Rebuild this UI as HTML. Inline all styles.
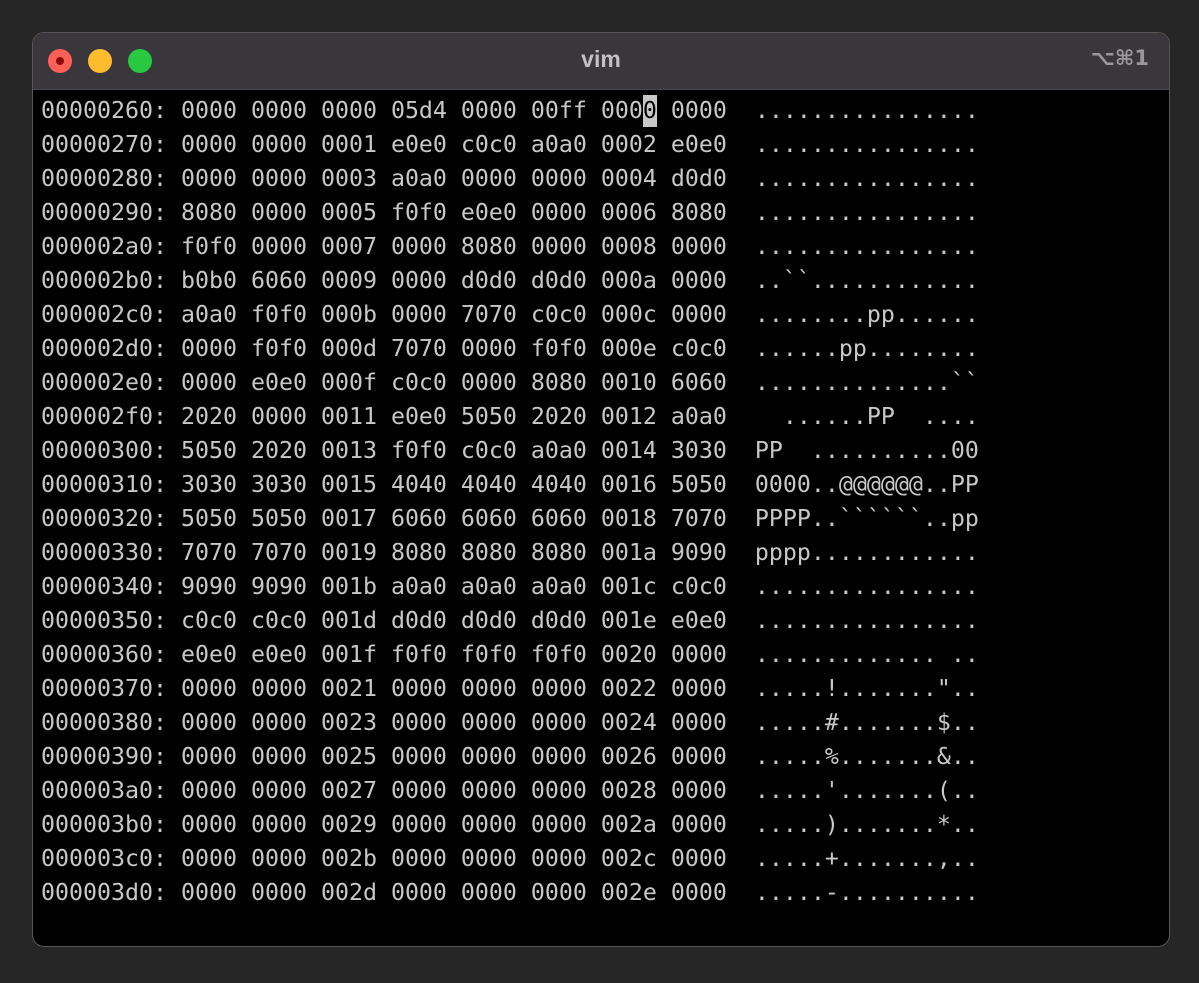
<!DOCTYPE html>
<html><head><style>
html,body{margin:0;padding:0;background:#262626;width:1199px;height:983px;overflow:hidden}
.win{position:absolute;left:32px;top:32px;width:1136px;height:913px;border:1px solid #555;border-radius:12px;background:#000;overflow:hidden}
.tb{position:absolute;left:0;top:0;right:0;height:56px;background:#3a373c;border-bottom:1px solid #4a484c}
.dot{position:absolute;top:16px;width:24px;height:24px;border-radius:50%}
.title{position:absolute;left:0;right:0;top:13px;text-align:center;font:bold 23px "Liberation Sans",sans-serif;color:#c2c0c4}
.sc{position:absolute;right:20px;top:13px;font:bold 21px "DejaVu Sans","Liberation Sans",sans-serif;color:#9a989c}
pre{position:absolute;left:8px;top:61px;margin:0;font-family:"DejaVu Sans Mono",monospace;font-size:23.25px;line-height:34px;color:#c8c8c8}
.cur{background:#c8c8c8;color:#000;display:inline-block;line-height:32px;height:32px;vertical-align:top;margin-top:1px}
</style></head><body>
<div class="win">
<div class="tb">
<div class="dot" style="left:15px;background:#fe5f57"><div style="position:absolute;left:8px;top:8px;width:8px;height:8px;border-radius:50%;background:#8e0a0a"></div></div>
<div class="dot" style="left:55px;background:#febc2e"></div>
<div class="dot" style="left:95px;background:#28c840"></div>
<div class="title">vim</div>
<div class="sc">⌥⌘1</div>
</div>
<pre>00000260: 0000 0000 0000 05d4 0000 00ff 000<span class="cur">0</span> 0000  ................
00000270: 0000 0000 0001 e0e0 c0c0 a0a0 0002 e0e0  ................
00000280: 0000 0000 0003 a0a0 0000 0000 0004 d0d0  ................
00000290: 8080 0000 0005 f0f0 e0e0 0000 0006 8080  ................
000002a0: f0f0 0000 0007 0000 8080 0000 0008 0000  ................
000002b0: b0b0 6060 0009 0000 d0d0 d0d0 000a 0000  ..&#96;&#96;............
000002c0: a0a0 f0f0 000b 0000 7070 c0c0 000c 0000  ........pp......
000002d0: 0000 f0f0 000d 7070 0000 f0f0 000e c0c0  ......pp........
000002e0: 0000 e0e0 000f c0c0 0000 8080 0010 6060  ..............&#96;&#96;
000002f0: 2020 0000 0011 e0e0 5050 2020 0012 a0a0    ......PP  ....
00000300: 5050 2020 0013 f0f0 c0c0 a0a0 0014 3030  PP  ..........00
00000310: 3030 3030 0015 4040 4040 4040 0016 5050  0000..@@@@@@..PP
00000320: 5050 5050 0017 6060 6060 6060 0018 7070  PPPP..&#96;&#96;&#96;&#96;&#96;&#96;..pp
00000330: 7070 7070 0019 8080 8080 8080 001a 9090  pppp............
00000340: 9090 9090 001b a0a0 a0a0 a0a0 001c c0c0  ................
00000350: c0c0 c0c0 001d d0d0 d0d0 d0d0 001e e0e0  ................
00000360: e0e0 e0e0 001f f0f0 f0f0 f0f0 0020 0000  ............. ..
00000370: 0000 0000 0021 0000 0000 0000 0022 0000  .....!......."..
00000380: 0000 0000 0023 0000 0000 0000 0024 0000  .....#.......$..
00000390: 0000 0000 0025 0000 0000 0000 0026 0000  .....%.......&amp;..
000003a0: 0000 0000 0027 0000 0000 0000 0028 0000  .....'.......(..
000003b0: 0000 0000 0029 0000 0000 0000 002a 0000  .....).......*..
000003c0: 0000 0000 002b 0000 0000 0000 002c 0000  .....+.......,..
000003d0: 0000 0000 002d 0000 0000 0000 002e 0000  .....-..........</pre>
</div>
</body></html>
